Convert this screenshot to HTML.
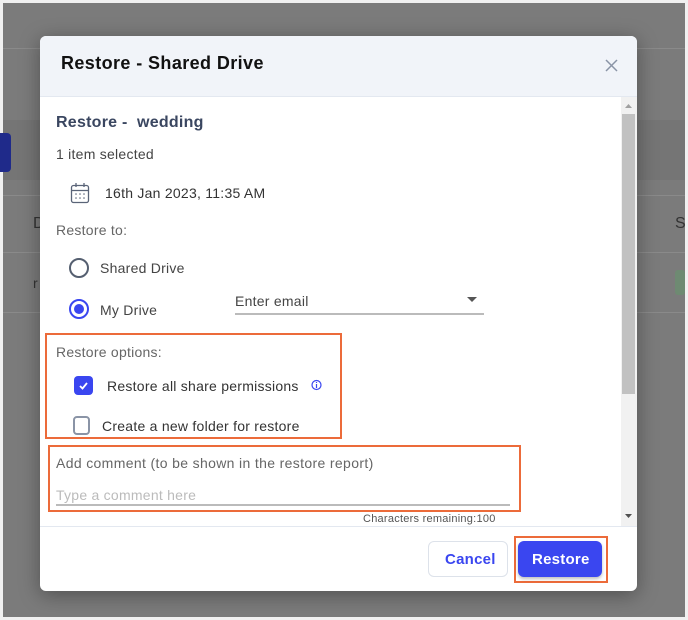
<!DOCTYPE html>
<html><head><style>
*{box-sizing:border-box;margin:0;padding:0}
body{width:688px;height:620px;background:#f0f0f0;font-family:"Liberation Sans",sans-serif;position:relative;overflow:hidden}
.bg{position:absolute;left:3px;top:3px;width:682px;height:614px;background:#7b7b7b}
.a{position:absolute}
.dlg{position:absolute;left:40px;top:36px;width:597px;height:555px;background:#fff;border-radius:6px;box-shadow:0 4px 20px rgba(0,0,0,.35);overflow:hidden}
.hd{height:61px;background:#f1f4f9;border-bottom:1px solid #e3e8f0}
.t{position:absolute;white-space:nowrap}
.dlg .t{letter-spacing:.25px}
</style></head><body>
<div class="bg"></div>
<div class="a" style="left:3px;top:48px;width:682px;height:1px;background:#8a8a8a"></div>
<div class="a" style="left:3px;top:120px;width:682px;height:60px;background:#757575"></div>
<div class="a" style="left:3px;top:195px;width:682px;height:1px;background:#8a8a8a"></div>
<div class="a" style="left:3px;top:252px;width:682px;height:1px;background:#8a8a8a"></div>
<div class="a" style="left:3px;top:312px;width:682px;height:1px;background:#8a8a8a"></div>
<div class="a" style="left:0;top:133px;width:11px;height:39px;background:#1f2a8a;border-radius:0 4px 4px 0"></div>
<div class="t" style="left:33px;top:215px;color:#333;font-size:16px">D</div>
<div class="t" style="left:675px;top:215px;color:#333;font-size:16px">S</div>
<div class="t" style="left:33px;top:275px;color:#333;font-size:14px">r</div>
<div class="a" style="left:675px;top:270px;width:10px;height:25px;background:#6e8a72;border-radius:3px"></div>

<div class="dlg">
 <div class="hd"></div>
 <div class="t" style="left:21px;top:17px;font-size:18px;font-weight:bold;color:#111;letter-spacing:.4px">Restore - Shared Drive</div>
 <svg class="a" style="left:565px;top:23px" width="13" height="13"><path d="M1 1L12 12M12 1L1 12" stroke="#8a94a6" stroke-width="1.5"/></svg>
 <div class="a" style="left:581px;top:61px;width:16px;height:429px;background:#f1f1f1"></div>
 <div class="a" style="left:582px;top:78px;width:13px;height:280px;background:#c1c1c1"></div>
 <svg class="a" style="left:584px;top:67px" width="9" height="6"><path d="M1 5L4.5 1L8 5Z" fill="#a0a0a0"/></svg>
 <svg class="a" style="left:584px;top:477px" width="9" height="6"><path d="M1 1L4.5 5L8 1Z" fill="#505050"/></svg>

 <div class="t" style="left:16px;top:78px;font-size:16px;font-weight:bold;color:#3a4660">Restore -&nbsp; wedding</div>
 <div class="t" style="left:16px;top:110px;font-size:14px;color:#444">1 item selected</div>
 <svg class="a" style="left:30px;top:146px" width="20" height="22" viewBox="0 0 20 22"><rect x="1.5" y="3.5" width="17" height="17" rx="2" fill="none" stroke="#5a6478" stroke-width="1.3"/><path d="M1.5 8.5H18.5M6 1V5M14 1V5" stroke="#5a6478" stroke-width="1.3"/><g fill="#5a6478"><circle cx="6" cy="12" r=".8"/><circle cx="10" cy="12" r=".8"/><circle cx="14" cy="12" r=".8"/><circle cx="6" cy="16" r=".8"/><circle cx="10" cy="16" r=".8"/><circle cx="14" cy="16" r=".8"/></g></svg>
 <div class="t" style="left:65px;top:149px;font-size:14px;color:#333">16th Jan 2023, 11:35 AM</div>
 <div class="t" style="left:16px;top:186px;font-size:14px;color:#666">Restore to:</div>
 <div class="a" style="left:29px;top:222px;width:20px;height:20px;border:2px solid #555f70;border-radius:50%"></div>
 <div class="t" style="left:60px;top:224px;font-size:14px;color:#444">Shared Drive</div>
 <div class="a" style="left:29px;top:263px;width:20px;height:20px;border:2px solid #3a46f0;border-radius:50%"></div>
 <div class="a" style="left:34px;top:268px;width:10px;height:10px;background:#3a46f0;border-radius:50%"></div>
 <div class="t" style="left:60px;top:266px;font-size:14px;color:#444">My Drive</div>
 <div class="t" style="left:195px;top:257px;font-size:14px;color:#444">Enter email</div>
 <svg class="a" style="left:427px;top:261px" width="10" height="6"><path d="M0 0H10L5 5Z" fill="#555"/></svg>
 <div class="a" style="left:195px;top:277px;width:249px;height:2px;background:#bbb"></div>

 <div class="a" style="left:5px;top:297px;width:297px;height:106px;border:2px solid #ec6b3a"></div>
 <div class="t" style="left:16px;top:308px;font-size:14px;color:#666">Restore options:</div>
 <div class="a" style="left:34px;top:340px;width:19px;height:19px;background:#3a46f0;border-radius:4px"></div>
 <svg class="a" style="left:38px;top:344px" width="11" height="11"><path d="M2 6L4.5 8.5L9 3" stroke="#fff" stroke-width="1.8" fill="none"/></svg>
 <div class="t" style="left:67px;top:342px;font-size:14px;color:#333">Restore all share permissions</div>
 <svg class="a" style="left:271px;top:343px" width="11" height="12"><circle cx="5.5" cy="6" r="4.5" fill="none" stroke="#3a46f0" stroke-width="1.2"/><path d="M5.5 5V9M5.5 3V4" stroke="#3a46f0" stroke-width="1.2"/></svg>
 <div class="a" style="left:33px;top:380px;width:17px;height:19px;border:2px solid #8a94a6;border-radius:4px"></div>
 <div class="t" style="left:62px;top:382px;font-size:14px;color:#333">Create a new folder for restore</div>

 <div class="a" style="left:8px;top:409px;width:473px;height:67px;border:2px solid #ec6b3a"></div>
 <div class="t" style="left:16px;top:419px;font-size:14px;color:#666;letter-spacing:.35px">Add comment (to be shown in the restore report)</div>
 <div class="t" style="left:16px;top:451px;font-size:14px;color:#bbb">Type a comment here</div>
 <div class="a" style="left:16px;top:468px;width:454px;height:2px;background:#bbb"></div>
 <div class="t" style="left:323px;top:477px;font-size:11px;color:#555">Characters remaining:100</div>

 <div class="a" style="left:0;top:490px;width:597px;height:1px;background:#e3e8f0"></div>
 <div class="a" style="left:388px;top:505px;width:80px;height:36px;border:1px solid #dde2ea;border-radius:6px"></div>
 <div class="t" style="left:405px;top:515px;font-size:15px;color:#3a46f0;font-weight:bold">Cancel</div>
 <div class="a" style="left:474px;top:500px;width:94px;height:47px;border:2px solid #ec6b3a"></div>
 <div class="a" style="left:478px;top:505px;width:84px;height:36px;background:#3a46f0;border-radius:6px;box-shadow:0 2px 3px rgba(0,0,0,.25)"></div>
 <div class="t" style="left:492px;top:515px;font-size:15px;color:#fff;font-weight:bold">Restore</div>
</div>
</body></html>
